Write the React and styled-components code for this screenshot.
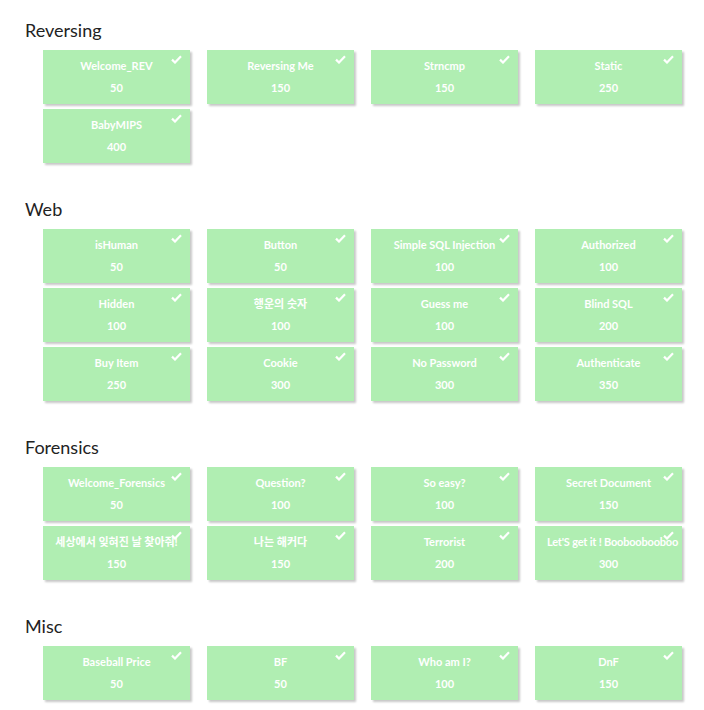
import React from 'react';
import styled, {createGlobalStyle} from 'styled-components';

const GlobalStyle = createGlobalStyle`
    body {
        margin: 0;
        background-color: white;
        font-family: Lato, "Noto Sans CJK KR", sans-serif;
    }
`
const Page = styled.div`
    width: 704px;
    padding: 20px 0 10px 25px;
    box-sizing: border-box;
    display: flex;
    flex-direction: column;
    gap: 36px;
`
const Section = styled.div`
    display: flex;
    flex-direction: column;
`
const Title = styled.h2`
    margin: 0 0 10px 0;
    font-size: 18px;
    line-height: 20px;
    font-weight: 400;
    color: #222;
`
const Grid = styled.div`
    display: grid;
    grid-template-columns: repeat(4, 147px);
    column-gap: 17px;
    row-gap: 5px;
    margin-left: 18px;
`
const Card = styled.div`
    position: relative;
    height: 54px;
    background-color: #b0eeb2;
    box-shadow: 2px 2px 2px rgba(0, 0, 0, 0.22);
    color: white;
    font-weight: 700;
    font-size: 11px;
    text-align: center;
    overflow: hidden;
    padding: 0 12px;
`
const Name = styled.div`
    margin-top: 9px;
    line-height: 13px;
    white-space: nowrap;
    letter-spacing: ${p => (p.$long ? '-0.2px' : '0')};
`
const Points = styled.div`
    margin-top: 9px;
    line-height: 13px;
`
const Check = styled.svg`
    position: absolute;
    top: 5px;
    right: 8px;
    width: 11px;
    height: 9px;
`

const sections = [
    {title: 'Reversing', items: [
        ['Welcome_REV', 50], ['Reversing Me', 150], ['Strncmp', 150], ['Static', 250], ['BabyMIPS', 400],
    ]},
    {title: 'Web', items: [
        ['isHuman', 50], ['Button', 50], ['Simple SQL Injection', 100], ['Authorized', 100],
        ['Hidden', 100], ['행운의 숫자', 100], ['Guess me', 100], ['Blind SQL', 200],
        ['Buy Item', 250], ['Cookie', 300], ['No Password', 300], ['Authenticate', 350],
    ]},
    {title: 'Forensics', items: [
        ['Welcome_Forensics', 50], ['Question?', 100], ['So easy?', 100], ['Secret Document', 150],
        ['세상에서 잊혀진 날 찾아줘!', 150], ['나는 해커다', 150], ['Terrorist', 200], ["Let'S get it ! Booboobooboo", 300],
    ]},
    {title: 'Misc', items: [
        ['Baseball Price', 50], ['BF', 50], ['Who am I?', 100], ['DnF', 150],
    ]},
]

function App() {
    return (
        <Page>
            <GlobalStyle />
            {sections.map(s => (
                <Section key={s.title}>
                    <Title>{s.title}</Title>
                    <Grid>
                        {s.items.map(([name, pts]) => (
                            <Card key={name}>
                                <Check viewBox="0 0 11 9">
                                    <path d="M1 4.6 L4 7.5 L10 1.2" fill="none" stroke="white" strokeWidth="2.2" />
                                </Check>
                                <Name $long={name.length > 20}>{name}</Name>
                                <Points>{pts}</Points>
                            </Card>
                        ))}
                    </Grid>
                </Section>
            ))}
        </Page>
    )
}

export default App
